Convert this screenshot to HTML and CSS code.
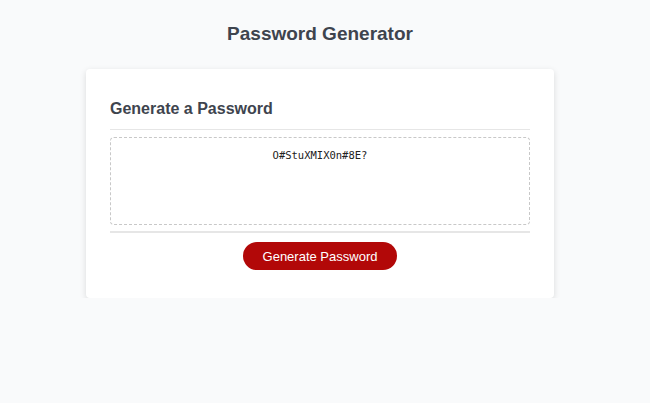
FILE: index.html
```html
<!DOCTYPE html>
<html>
<head>
<meta charset="utf-8">
<link rel="stylesheet" href="styles.css">
</head>
<body>
<div class="wrapper">
  <h1 class="title">Password Generator</h1>
  <div class="card">
    <div class="card-header">
      <h2>Generate a Password</h2>
    </div>
    <div class="card-body">
      <div class="password">O#StuXMIX0n#8E?</div>
    </div>
    <div class="card-footer">
      <button class="btn">Generate Password</button>
    </div>
  </div>
</div>
</body>
</html>
```
FILE: styles.css
```css
html, body {
  margin: 0;
  padding: 0;
  background: #f9fafb;
  font-family: "Liberation Sans", Arial, sans-serif;
}
.wrapper {
  width: 640px;
  display: flex;
  flex-direction: column;
  align-items: center;
}
.title {
  margin: 22px 0 0;
  font-size: 19px;
  line-height: 23px;
  font-weight: bold;
  color: #3e444e;
}
.card {
  margin-top: 24px;
  width: 420px;
  padding: 24px 24px 28px;
  background: #fff;
  border-radius: 4px;
  box-shadow: 0 2px 6px rgba(0,0,0,0.13);
}
.card-header {
  border-bottom: 1px solid #e6e6e6;
  padding: 6px 0 10px;
}
.card-header h2 {
  margin: 0;
  font-size: 16px;
  line-height: 20px;
  font-weight: bold;
  color: #3e444e;
}
.card-body {
  margin-top: 7px;
  border-bottom: 2px solid #e6e6e6;
  padding-bottom: 6px;
}
.password {
  border: 1px dashed #c8c8c8;
  border-radius: 4px;
  text-align: center;
  font-family: "DejaVu Sans Mono", monospace;
  font-size: 10.5px;
  line-height: 14px;
  padding-top: 10px;
  box-sizing: border-box;
  height: 88px;
  color: #222;
}
.card-footer {
  display: flex;
  justify-content: center;
  padding-top: 9px;
}
.btn {
  width: 154px;
  height: 28px;
  border: none;
  border-radius: 14px;
  background: #b20808;
  color: #fff;
  font-family: "Liberation Sans", Arial, sans-serif;
  font-size: 13px;
}
```
